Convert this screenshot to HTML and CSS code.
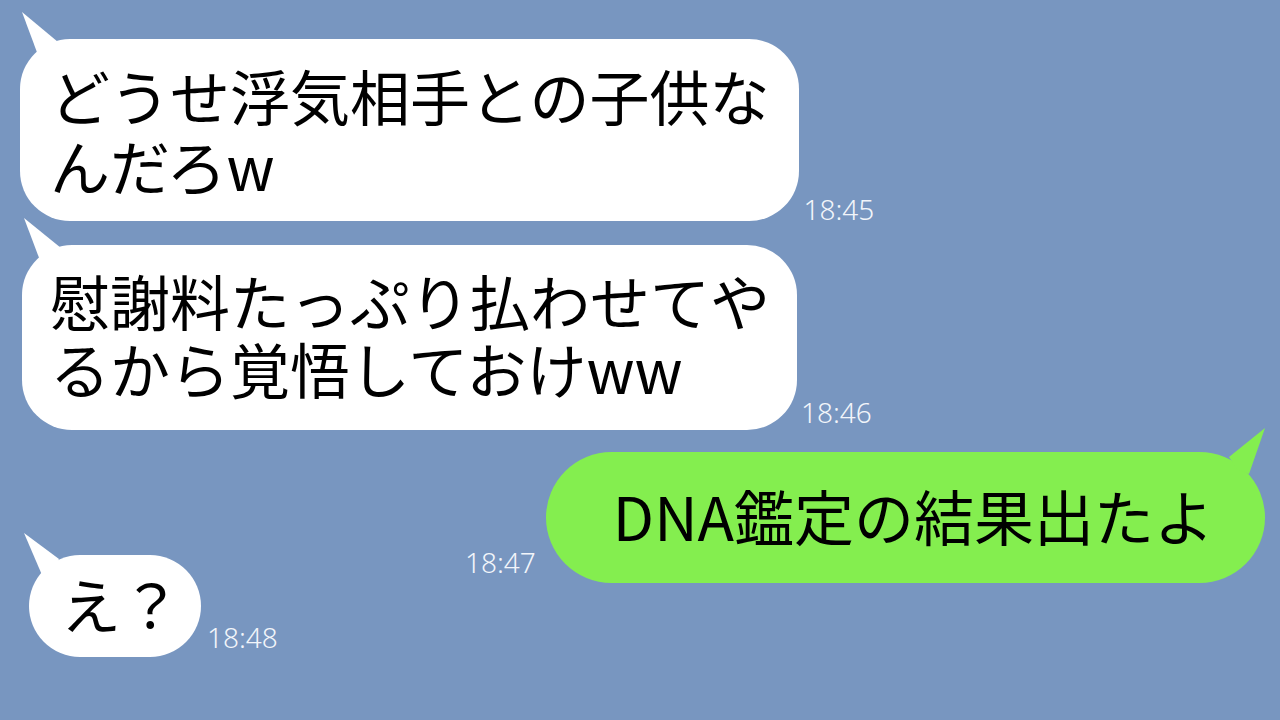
FILE: index.html
```html
<!DOCTYPE html>
<html>
<head>
	<title>トーク</title>
	<link rel="stylesheet" href="styles.css">
</head>
<body>
	<div class="chat">
		<div class="row row-1">
			<div class="bubble bubble-in">
				<svg class="tail tail-in" width="60" height="60" viewBox="0 0 60 60"><polygon points="2,3 18,46 30,44 38,33"/></svg>
				どうせ浮気相手との子供な<br>んだろw
			</div>
			<span class="time">18:45</span>
		</div>

		<div class="row row-2">
			<div class="bubble bubble-in">
				<svg class="tail tail-in" width="60" height="60" viewBox="0 0 60 60"><polygon points="2,3 19,48 30,44 39,33"/></svg>
				慰謝料たっぷり払わせてや<br>るから覚悟しておけww
			</div>
			<span class="time">18:46</span>
		</div>

		<div class="row row-3">
			<span class="time">18:47</span>
			<div class="bubble bubble-out">
				<svg class="tail tail-out" width="60" height="60" viewBox="0 0 60 60"><polygon points="58,4 22,33 30,45 42,50"/></svg>
				DNA鑑定の結果出たよ
			</div>
		</div>

		<div class="row row-4">
			<div class="bubble bubble-in bubble-short">
				<svg class="tail tail-short" width="60" height="60" viewBox="0 0 60 60"><polygon points="3,4 21,46 30,44 38,30"/></svg>
				え？
			</div>
			<span class="time">18:48</span>
		</div>
	</div>
</body>
</html>
```

FILE: styles.css
```css
html, body {
	margin: 0;
	height: 100%;
}
body {
	background: #7896c0;
	font-family: "Noto Sans CJK JP", "Noto Sans", sans-serif;
	overflow: hidden;
}
.chat {
	display: flex;
	flex-direction: column;
	width: 1280px;
	height: 720px;
}
.row {
	display: flex;
	align-items: flex-end;
}
.row-1 {
	margin: 39px 0 0 20px;
}
.row-2 {
	margin: 24px 0 0 22px;
}
.row-3 {
	justify-content: flex-end;
	margin: 22px 15px 0 0;
}
.row-4 {
	margin: -28px 0 0 29px;
}

.bubble {
	position: relative;
	font-size: 60px;
	line-height: 70px;
	color: #000;
	white-space: nowrap;
}
.bubble-in {
	background: #fff;
	border-radius: 50px;
	padding: 21px 30px 21px 30px;
}
.row-2 .bubble-in {
	line-height: 68px;
	padding: 21px 27px 28px 28px;
}
.bubble-out {
	background: #84ee4f;
	border-radius: 66px;
	padding: 28px 51px 33px 67px;
}
.bubble-short {
	padding: 13px 20px 19px 32px;
	border-radius: 51px;
}

.tail {
	position: absolute;
	top: -30px;
}
.tail-in {
	left: 0;
	fill: #fff;
}
.tail-short {
	left: -8px;
	top: -26px;
	fill: #fff;
}
.tail-out {
	right: -2px;
	top: -28px;
	fill: #84ee4f;
}

.time {
	font-family: "Noto Sans", sans-serif;
	font-weight: 300;
	font-size: 28px;
	line-height: 28px;
	color: #f2f5fa;
	margin: 0 0 -2px 4px;
}
.row-2 .time {
	margin: 0 0 4px 4px;
}
.row-3 .time {
	margin: 0 10px 7px 0;
}
.row-4 .time {
	margin: 0 0 6px 6px;
}
```
